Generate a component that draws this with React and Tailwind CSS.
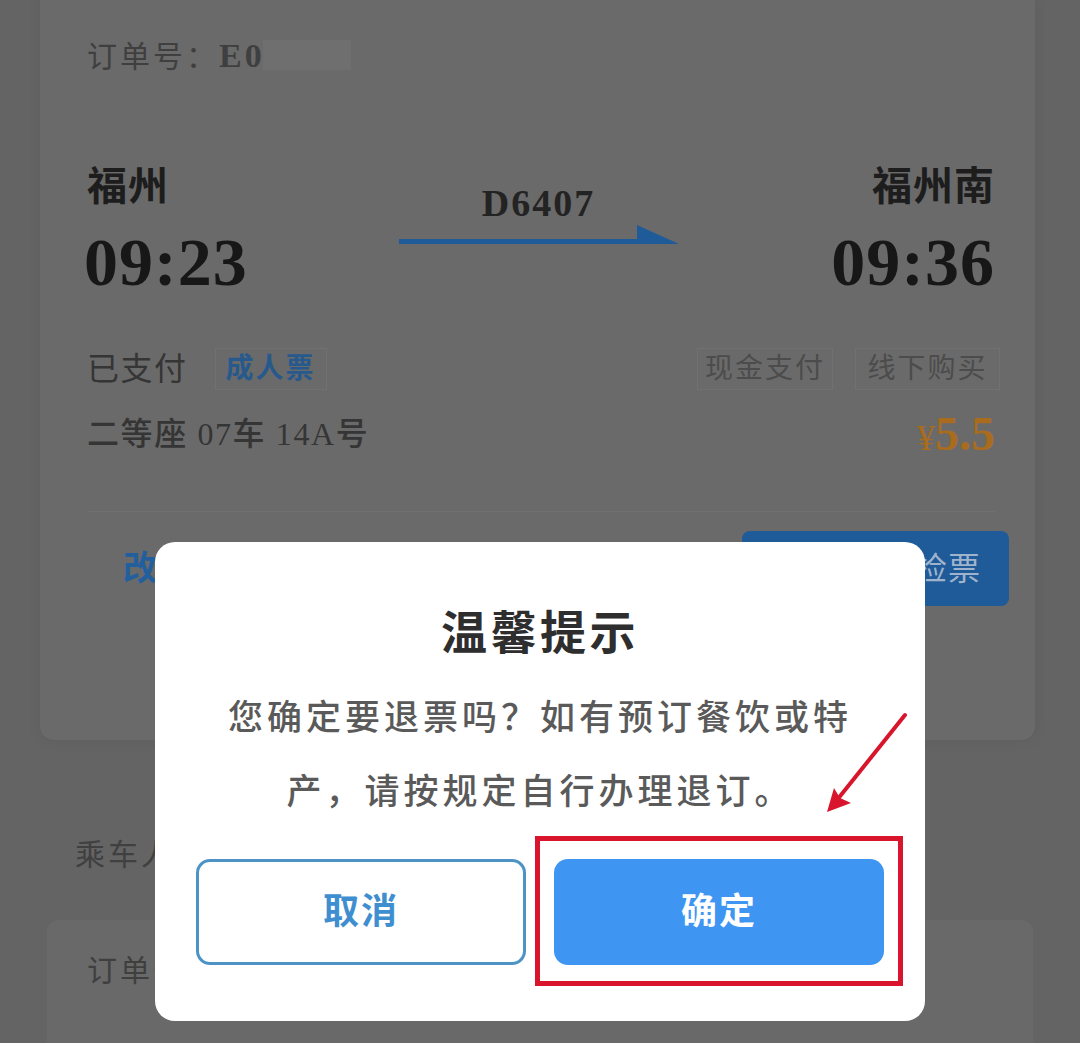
import React from 'react';

const cjk = "font-['Liberation_Serif','Noto_Sans_CJK_SC',serif]";

const Tag = ({ children, className = '' }) => (
  <span className={`flex h-[42px] items-center justify-center border border-[#717171] text-[28px] tracking-[2px] ${className}`}>
    {children}
  </span>
);

const TicketCard = () => (
  <div className="mr-[45px] ml-[40px] flex h-[740px] flex-col rounded-b-[14px] bg-[#6a6a6a] pr-[40px] pl-[47px] shadow-[0_0_8px_rgba(90,90,90,0.5)]">
    {/* Order number */}
    <div className="mt-[32px] flex h-[46px] items-center text-[30px] tracking-[3px] text-[#3f3f3f]">
      <span>
        订单号：<span className="text-[34px] font-bold">E0</span>
      </span>
      <span className="ml-[-2px] h-[30px] w-[88px] bg-[#6f6f6f]"></span>
    </div>

    {/* Route */}
    <div className="mt-[85px] flex items-start justify-between">
      <div>
        <div className="h-[48px] text-[40px] leading-[48px] font-bold tracking-[1px] text-[#1d1d1d]">福州</div>
        <div className="mt-[13px] ml-[-3px] h-[76px] text-[68px] leading-[76px] font-bold tracking-[1px] text-[#171717]">09:23</div>
      </div>
      <div className="mt-[20px] ml-[-4px] flex w-[282px] flex-col items-center">
        <div className="ml-[2px] h-[40px] text-[38px] leading-[40px] font-bold tracking-[2px] text-[#232323]">D6407</div>
        <svg className="mt-[1px]" width="282" height="22" viewBox="0 0 282 22">
          <path d="M2 15 H240 V1 L282 20 H2 Z" fill="#1f5a99" />
        </svg>
      </div>
      <div className="flex flex-col items-end">
        <div className="h-[48px] text-[40px] leading-[48px] font-bold tracking-[1px] text-[#1d1d1d]">福州南</div>
        <div className="mt-[13px] h-[76px] text-[68px] leading-[76px] font-bold tracking-[1px] text-[#171717]">09:36</div>
      </div>
    </div>

    {/* Status and tags */}
    <div className="mt-[45px] flex items-center justify-between">
      <div className="flex items-center">
        <span className="text-[32px] tracking-[1.5px] text-[#353535]">已支付</span>
        <Tag className="ml-[27px] w-[112px] font-bold text-[#27598d]">成人票</Tag>
      </div>
      <div className="mr-[-5px] flex gap-[22px] text-[#4c4c4c]">
        <Tag className="w-[136px]">现金支付</Tag>
        <Tag className="w-[145px]">线下购买</Tag>
      </div>
    </div>

    {/* Seat and price */}
    <div className="mt-[5px] flex items-center justify-between">
      <span className="text-[32px] font-medium tracking-[1.6px] text-[#353535]">二等座 07车 14A号</span>
      <span className="flex items-baseline text-[#a96c1f]">
        <span className="text-[36px]">¥</span>
        <span className="text-[48px] font-bold">5.5</span>
      </span>
    </div>

    <div className="mt-[41px] h-px bg-[#707070]"></div>

    {/* Actions, mostly covered by the dialog */}
    <div className="mt-[19px] mr-[-14px] flex items-center justify-between pl-[36px]">
      <span className="text-[34px] font-bold text-[#245f9d]">改签</span>
      <div className="flex h-[75px] w-[267px] items-center justify-end rounded-[8px] bg-[#1f5a99] pr-[28px] text-[32px] tracking-[1px] text-[#9fb4cc]">
        去检票
      </div>
    </div>
  </div>
);

const ConfirmDialog = () => (
  <div className="absolute inset-0 flex items-start justify-center pt-[542px]">
    <div className="flex h-[479px] w-[770px] flex-col items-center rounded-[20px] bg-white px-[41px]">
      <h2 className="mt-[60px] h-[64px] text-[46px] leading-[64px] font-bold tracking-[3.5px] text-[#2e2e2e]">温馨提示</h2>
      <p className="mt-[16px] text-center text-[35px] leading-[74px] font-medium tracking-[4px] text-[#5a5a5a]">
        您确定要退票吗？如有预订餐饮或特
        <br />
        产，请按规定自行办理退订。
      </p>
      <div className="relative mt-[29px] flex w-full justify-between">
        <button className="flex h-[106px] w-[330px] items-center justify-center rounded-[14px] border-[3px] border-[#4d93c6] text-[36px] font-bold tracking-[2px] text-[#3f8fd0]">
          取消
        </button>
        <button className="relative flex h-[106px] w-[330px] items-center justify-center rounded-[14px] bg-[#3e95f2] text-[36px] font-bold tracking-[2px] text-white">
          确定
          {/* Red annotation frame */}
          <span className="absolute top-[-23px] right-[-19px] bottom-[-21px] left-[-19px] border-[5px] border-[#d8152c]"></span>
        </button>
        {/* Red annotation arrow */}
        <svg className="absolute top-[-147px] right-[-25px]" width="84" height="102" viewBox="0 0 84 102">
          <path d="M80 3 L12 88" stroke="#d8152c" strokeWidth="4" strokeLinecap="round" fill="none" />
          <path d="M2 100 L9 76 L15 86 L26 91 Z" fill="#d8152c" />
        </svg>
      </div>
    </div>
  </div>
);

export default function App() {
  return (
    <div className={`relative h-[1043px] w-[1080px] overflow-hidden bg-[#646464] ${cjk}`}>
      <TicketCard />

      {/* Next order section, behind the dialog */}
      <div className="mt-[95px] pl-[75px] text-[30px] leading-[40px] tracking-[3px] text-[#404040]">乘车人</div>
      <div className="mx-[47px] mt-[45px] h-[200px] rounded-t-[12px] bg-[#696969] pt-[28px] pl-[40px] text-[30px] leading-[46px] tracking-[3px] text-[#3f3f3f]">
        订单号
      </div>

      <ConfirmDialog />
    </div>
  );
}
